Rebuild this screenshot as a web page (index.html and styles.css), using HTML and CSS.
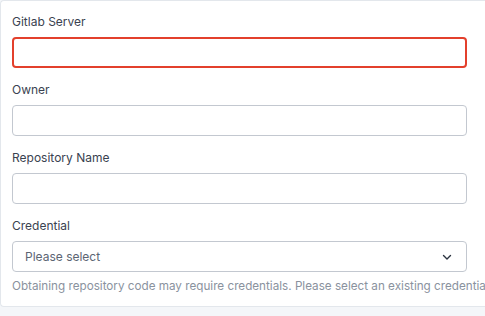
FILE: index.html
```html
<!DOCTYPE html>
<html>
<head>
<meta charset="utf-8">
<link rel="stylesheet" href="styles.css">
</head>
<body>
<div class="card">
  <div class="field">
    <label class="label">Gitlab Server</label>
    <div class="input input-error"></div>
  </div>
  <div class="field">
    <label class="label">Owner</label>
    <div class="input"></div>
  </div>
  <div class="field">
    <label class="label">Repository Name</label>
    <div class="input"></div>
  </div>
  <div class="field">
    <label class="label">Credential</label>
    <div class="input select">
      <span class="placeholder">Please select</span>
      <svg class="chev" width="12" height="12" viewBox="0 0 12 12"><path d="M2.5 4.5 L6 8 L9.5 4.5" fill="none" stroke="#2b3340" stroke-width="1.4" stroke-linecap="round" stroke-linejoin="round"/></svg>
    </div>
    <div class="help">Obtaining repository code may require credentials. Please select an existing credential.</div>
  </div>
</div>
</body>
</html>
```
FILE: styles.css
```css
html, body {
  margin: 0;
  padding: 0;
  background: #f4f6f9;
  font-family: Inter, "Noto Sans", sans-serif;
  overflow: hidden;
  width: 485px;
  height: 316px;
}
.card {
  background: #fff;
  border-top: 1px solid #e3e7ec;
  border-left: 1px solid #e3e7ec;
  border-bottom: 1px solid #e3e7ec;
  border-radius: 4px 0 0 4px;
  width: 485px;
  height: 307px;
  box-sizing: border-box;
  padding: 13px 0 0 11px;
  overflow: hidden;
}
.field {
  margin-bottom: 14px;
  width: 455px;
}
.label {
  display: block;
  font-size: 12px;
  line-height: 16px;
  color: #3a4250;
  margin-bottom: 7px;
}
.input {
  box-sizing: border-box;
  height: 31px;
  border: 1px solid #c3c8d0;
  border-radius: 4px;
  background: #fff;
}
.input-error {
  border: 2px solid #e3402c;
}
.select {
  display: flex;
  align-items: center;
  justify-content: space-between;
  padding: 0 13px 0 12px;
}
.placeholder {
  font-size: 12px;
  color: #5c6573;
}
.help {
  margin-top: 6px;
  font-size: 11.7px;
  line-height: 16px;
  color: #8a929e;
  white-space: nowrap;
}
```
